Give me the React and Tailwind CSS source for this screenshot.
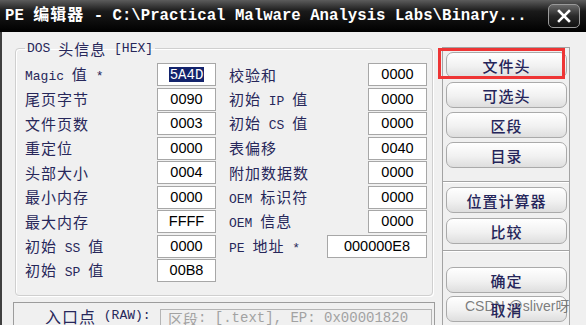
const CJK = /([\u3000-\u303f\u4e00-\u9fff\uff00-\uffef]+)/;

function Mixed({ text, latin, cjk }) {
  const parts = text.split(CJK).filter((p) => p.length);
  return (
    <>
      {parts.map((p, i) =>
        CJK.test(p) ? (
          <span key={i} className={cjk}>{p}</span>
        ) : (
          <span key={i} className={latin}>{p}</span>
        )
      )}
    </>
  );
}

const monoF = "font-['Liberation_Mono','Noto_Sans_CJK_SC',monospace]";
const cjkF = "font-['Noto_Sans_CJK_SC',sans-serif]";

function Label({ text }) {
  return (
    <span className="whitespace-pre text-[#27275a] leading-none">
      <Mixed
        text={text}
        latin={`${monoF} text-[13px]`}
        cjk={`${cjkF} text-[15px] tracking-[1px]`}
      />
    </span>
  );
}

function Box({ value, selected, wide }) {
  return (
    <div
      className={`${wide ? "w-[100px]" : "w-[59px]"} h-[23px] bg-white border border-[#a7a7a7] flex items-center justify-center font-['Liberation_Sans',sans-serif] text-[14.5px] text-black leading-none`}
    >
      {selected ? (
        <span className="bg-[#13236c] text-white px-[1px] h-[15px] flex items-center font-['Liberation_Mono',monospace] text-[14px]">{value}</span>
      ) : (
        <span>{value}</span>
      )}
    </div>
  );
}

function Row({ label, value, selected, wide }) {
  return (
    <div className="h-[24.5px] flex items-start justify-between">
      <div className="h-[23px] flex items-center">
        <Label text={label} />
      </div>
      <Box value={value} selected={selected} wide={wide} />
    </div>
  );
}

function Btn({ label }) {
  return (
    <div className="h-[26px] rounded-[7px] border border-[#aaaaaa] bg-[linear-gradient(#ffffff,#f1f1f1_55%,#dedede)] flex items-center justify-center">
      <span className={`relative z-20 ${cjkF} text-[15px] font-medium tracking-[1px] text-[#25255a] leading-none`}>
        {label}
      </span>
    </div>
  );
}

function Sep() {
  return <div className="h-[2px] border-t border-[#a3a3a3] bg-white" />;
}

export default function App() {
  const left = [
    ["Magic 值 *", "5A4D", true],
    ["尾页字节", "0090"],
    ["文件页数", "0003"],
    ["重定位", "0000"],
    ["头部大小", "0004"],
    ["最小内存", "0000"],
    ["最大内存", "FFFF"],
    ["初始 SS 值", "0000"],
    ["初始 SP 值", "00B8"],
  ];
  const mid = [
    ["校验和", "0000"],
    ["初始 IP 值", "0000"],
    ["初始 CS 值", "0000"],
    ["表偏移", "0040"],
    ["附加数据数", "0000"],
    ["OEM 标识符", "0000"],
    ["OEM 信息", "0000"],
    ["PE 地址 *", "000000E8", false, true],
  ];

  return (
    <div className="relative w-[586px] h-[325px] overflow-hidden bg-[#f0f0f0]">
      {/* Title bar */}
      <div className="h-[32px] bg-[linear-gradient(#5c5c5c,#1a1a1a_35%,#000000)] flex items-center justify-between pl-[5px] pr-[6px]">
        <div className="whitespace-pre text-white font-bold leading-none pb-[2px]">
          <Mixed
            text={"PE 编辑器 - C:\\Practical Malware Analysis Labs\\Binary..."}
            latin={`${monoF} text-[15.7px]`}
            cjk={`${cjkF} text-[16px] tracking-[1px]`}
          />
        </div>
        <div className="w-[32px] h-[24px] rounded-[5px] border border-[#9a9a9a] bg-[linear-gradient(#6a6a6a,#2a2a2a_50%,#111)] flex items-center justify-center">
          <svg width="14" height="14" viewBox="0 0 14 14">
            <path d="M2 2 L12 12 M12 2 L2 12" stroke="white" strokeWidth="2.6" strokeLinecap="square" />
          </svg>
        </div>
      </div>

      {/* Body */}
      <div className="flex h-[293px] border-l-2 border-[#404040]">
        {/* Left column */}
        <div className="ml-[11px] w-[422px] flex flex-col">
          <fieldset className="ml-[2px] w-[418px] mt-[7px] border border-[#cfcfcf] rounded-[4px] shadow-[inset_1px_1px_0_#ffffff,1px_1px_0_#ffffff] pl-[9px] pr-[5px] pt-[6px] pb-[11px]">
            <legend className="ml-0 px-[2px] h-[18px] flex items-center whitespace-pre text-[#27275a] leading-none">
              <Mixed
                text="DOS 头信息 [HEX]"
                latin={`${monoF} text-[13px]`}
                cjk={`${cjkF} text-[15px] tracking-[1px]`}
              />
            </legend>
            <div className="flex">
              <div className="w-[191px] flex flex-col">
                {left.map(([l, v, s]) => (
                  <Row key={l} label={l} value={v} selected={s} />
                ))}
              </div>
              <div className="ml-[13px] w-[198px] flex flex-col">
                {mid.map(([l, v, s, w]) => (
                  <Row key={l} label={l} value={v} selected={s} wide={w} />
                ))}
              </div>
            </div>
          </fieldset>

          {/* Entry point box */}
          <div className="mt-[6px] flex-1 border-t border-l border-r border-[#9c9c9c] flex items-start pt-[3px]">
            <div className="w-[146px] pl-[31px] h-[20px] flex items-center whitespace-pre text-[#27275a] leading-none">
              <Mixed
                text="入口点 (RAW):"
                latin={`${monoF} text-[13px]`}
                cjk={`${cjkF} text-[16px] tracking-[1px]`}
              />
            </div>
            <div className="mt-[3px] w-[272px] h-[30px] border border-[#b5b5b5] bg-[#f0f0f0] flex items-start pt-[1px] pl-[7px] whitespace-pre text-[#a2a2a2] leading-none">
              <Mixed
                text="区段: [.text], EP: 0x00001820"
                latin={`${monoF} text-[14px]`}
                cjk={`${cjkF} text-[15px]`}
              />
            </div>
          </div>
        </div>

        {/* Right panel */}
        <div className="ml-[7px] mt-[15px] w-[128px] border-t border-l border-r border-[#a3a3a3] flex flex-col">
          <div className="pl-[3px] pr-[2px] pt-[4px] flex flex-col gap-[4px]">
            <Btn label="文件头" />
            <Btn label="可选头" />
            <Btn label="区段" />
            <Btn label="目录" />
          </div>
          <div className="mt-[13px]">
            <Sep />
          </div>
          <div className="pl-[3px] pr-[2px] pt-[4px] flex flex-col gap-[5px]">
            <Btn label="位置计算器" />
            <Btn label="比较" />
          </div>
          <div className="mt-[6px]">
            <Sep />
          </div>
          <div className="pl-[3px] pr-[2px] pt-[15px] flex flex-col gap-[3px]">
            <Btn label="确定" />
            <Btn label="取消" />
          </div>
        </div>
      </div>

      {/* Red annotation rectangle */}
      <div className="absolute left-[438px] top-[48px] w-[127px] h-[31px] border-[3px] border-[#ee3535]" />

      {/* Watermark */}
      <div className="absolute left-[465px] top-[299px] z-10 whitespace-pre font-['Liberation_Sans','Noto_Sans_CJK_SC',sans-serif] text-[14px] text-[#6e6e6e]/90 leading-none">
        CSDN @sliver呀
      </div>
    </div>
  );
}
